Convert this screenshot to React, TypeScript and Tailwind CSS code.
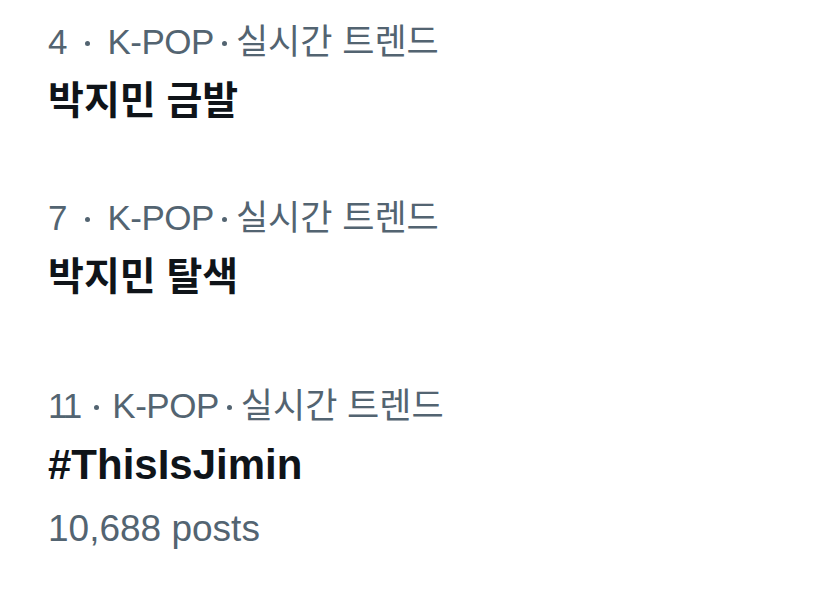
const font = { fontFamily: '"Liberation Sans", "Noto Sans CJK KR", sans-serif' };

type Trend = {
  rank: number;
  rankClass?: string;
  sepW: string;
  title: string;
  latin?: boolean;
  posts?: string;
  gapTop: string;
};

const trends: Trend[] = [
  { rank: 4, sepW: "w-[40px]", title: "박지민 금발", gapTop: "mt-[18px]" },
  { rank: 7, sepW: "w-[40px]", title: "박지민 탈색", gapTop: "mt-[67px]" },
  {
    rank: 11,
    rankClass: "tracking-[-2px]",
    sepW: "w-[32px]",
    title: "#ThisIsJimin",
    latin: true,
    posts: "10,688 posts",
    gapTop: "mt-[79px]",
  },
];

function Dot({ w }: { w: string }) {
  return (
    <span className={`${w} flex justify-center items-center self-stretch`}>
      <span className="w-[5px] h-[5px] rounded-full bg-[#536471] translate-y-[1px]" />
    </span>
  );
}

function TrendItem({ t }: { t: Trend }) {
  return (
    <div className={`${t.gapTop} flex flex-col`}>
      <div className="flex items-center text-[35px] leading-[48px] text-[#536471] whitespace-nowrap">
        <span className={t.rankClass}>{t.rank}</span>
        <Dot w={t.sepW} />
        <span className="tracking-[-0.5px]">K-POP</span>
        <Dot w="w-[22px]" />
        <span>실시간 트렌드</span>
      </div>
      <div
        className={`mt-[9px] leading-[52px] font-bold text-[#0f1419] whitespace-nowrap ${
          t.latin ? "text-[42px]" : "text-[39px]"
        }`}
      >
        {t.title}
      </div>
      {t.posts && (
        <div className="mt-[14px] text-[37px] leading-[48px] text-[#536471] whitespace-nowrap">
          {t.posts}
        </div>
      )}
    </div>
  );
}

export default function App() {
  return (
    <div className="w-[835px] h-[600px] bg-white overflow-hidden pl-[48px]" style={font}>
      {trends.map((t) => (
        <TrendItem key={t.rank} t={t} />
      ))}
    </div>
  );
}
